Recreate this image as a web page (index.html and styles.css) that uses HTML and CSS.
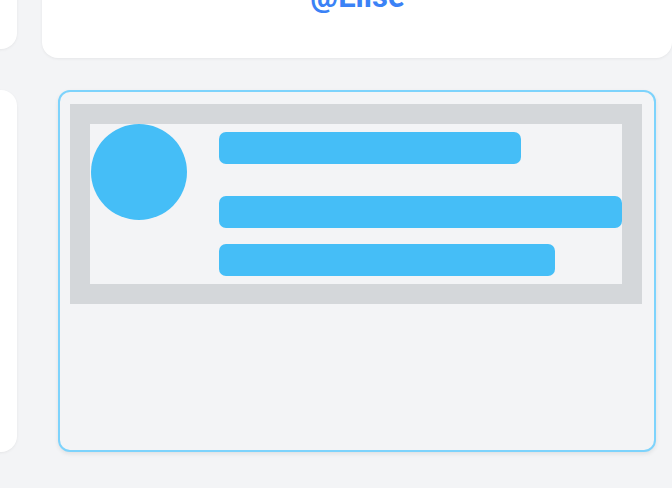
FILE: index.html
```html
<!DOCTYPE html>
<html>
<head>
<meta charset="utf-8">
<link rel="stylesheet" href="styles.css">
</head>
<body>
<div class="page">
  <div class="card side-top"></div>
  <div class="card profile">
    <div class="handle">@Elise</div>
  </div>
  <div class="card side-main"></div>
  <div class="slot">
    <div class="skeleton-card">
      <div class="frame">
        <div class="frame-inner">
          <div class="avatar"></div>
          <div class="lines">
            <div class="bar bar-short"></div>
            <div class="bar bar-full"></div>
            <div class="bar bar-mid"></div>
          </div>
        </div>
      </div>
    </div>
  </div>
</div>
</body>
</html>
```
FILE: styles.css
```css
html, body {
  margin: 0;
  padding: 0;
  background: #f3f4f6;
  overflow: hidden;
}
body {
  font-family: "Liberation Sans", Arial, sans-serif;
  width: 672px;
  height: 488px;
}
.page {
  display: grid;
  grid-template-columns: 200px 630px;
  column-gap: 25px;
  row-gap: 32px;
  align-items: start;
  margin-left: -183px;
  margin-top: -100px;
}
.card {
  background: #ffffff;
  border-radius: 16px;
  box-shadow: 0 1px 3px rgba(0, 0, 0, 0.06);
}
.side-top {
  height: 149px;
}
.profile {
  height: 158px;
  display: flex;
  flex-direction: column;
  justify-content: flex-end;
  align-items: center;
  padding-left: 1px;
  box-sizing: border-box;
  padding-bottom: 46px;
}
.handle {
  color: #3b82f6;
  font-weight: 700;
  font-size: 31px;
  line-height: 1;
  font-family: Roboto, "Liberation Sans", sans-serif;
}
.side-main {
  height: 362px;
}
.slot {
  padding: 0 16px;
}
.skeleton-card {
  height: 362px;
  box-sizing: border-box;
  border: 2px solid #7dd3fc;
  border-radius: 12px;
  background: #f3f4f6;
  padding: 12px 12px 12px 10px;
  box-shadow: 0 2px 4px rgba(0, 0, 0, 0.08);
}
.frame {
  border: 20px solid #d4d7da;
  background: #f3f4f6;
}
.frame-inner {
  display: flex;
  gap: 32px;
  height: 160px;
  padding-left: 1px;
}
.avatar {
  width: 96px;
  height: 96px;
  border-radius: 50%;
  background: #45bef7;
  flex: none;
}
.lines {
  flex: 1;
  display: flex;
  flex-direction: column;
  padding-top: 8px;
}
.bar {
  height: 32px;
  border-radius: 7px;
  background: #45bef7;
}
.bar-short {
  width: 302px;
  margin-bottom: 32px;
}
.bar-full {
  width: 100%;
  margin-bottom: 16px;
}
.bar-mid {
  width: 336px;
}
```
